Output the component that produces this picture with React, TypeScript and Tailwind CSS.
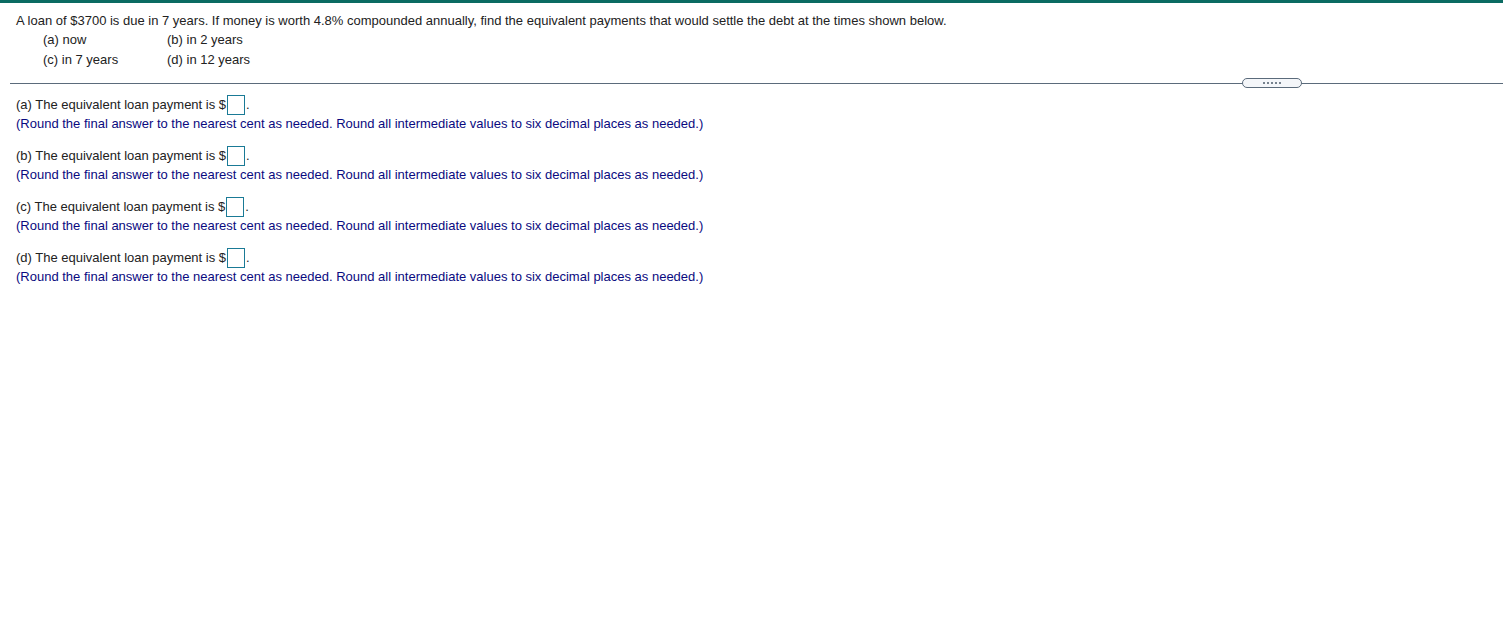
export default function App() {
  const parts = ["(a)", "(b)", "(c)", "(d)"];

  return (
    <div className="min-h-[634px] bg-white font-['Liberation_Sans',Arial,sans-serif] text-[13px] leading-[19px] text-[#222222]">
      <div className="h-[3px] bg-[#0b6b62]" />

      <div className="pl-4 pt-[8px]">
        <p>A loan of $3700 is due in 7 years. If money is worth 4.8% compounded annually, find the equivalent payments that would settle the debt at the times shown below.</p>
        <div className="ml-[27px] grid grid-cols-[124px_1fr] gap-y-[1px]">
          <span>(a) now</span>
          <span>(b) in 2 years</span>
          <span>(c) in 7 years</span>
          <span>(d) in 12 years</span>
        </div>
      </div>

      <div className="relative ml-[10px] mt-[14px] h-px bg-[#5b6b7b]">
        <div className="absolute left-[1232px] top-[-5px] flex h-[10px] w-[60px] items-center justify-center gap-[2px] rounded-full border border-[#5b6b7b] bg-[#f4f6f9]">
          {[0, 1, 2, 3, 4].map((i) => (
            <span key={i} className="h-[2px] w-[2px] bg-[#76828e]" />
          ))}
        </div>
      </div>

      <div className="flex flex-col gap-[13px] pl-4 pt-[11px]">
        {parts.map((p) => (
          <div key={p}>
            <div className="flex h-[19px] items-center">
              <span>{p} The equivalent loan payment is $</span>
              <span className="ml-[1px] h-[20px] w-[18px] border border-[#1a7a96] bg-white" />
              <span className="ml-[1px]">.</span>
            </div>
            <p className="text-[#0a0a80]">(Round the final answer to the nearest cent as needed. Round all intermediate values to six decimal places as needed.)</p>
          </div>
        ))}
      </div>
    </div>
  );
}
